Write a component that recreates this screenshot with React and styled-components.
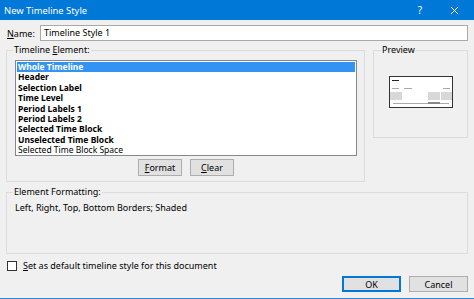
import React from "react";
import styled, { createGlobalStyle } from "styled-components";

const GlobalStyle = createGlobalStyle`
  html, body {
    margin: 0;
    padding: 0;
    background: #f0f0f0;
  }
  * {
    box-sizing: border-box;
  }
`;

const elements = [
  { name: "Whole Timeline", bold: true },
  { name: "Header", bold: true },
  { name: "Selection Label", bold: true },
  { name: "Time Level", bold: true },
  { name: "Period Labels 1", bold: true },
  { name: "Period Labels 2", bold: true },
  { name: "Selected Time Block", bold: true },
  { name: "Unselected Time Block", bold: true },
  { name: "Selected Time Block Space", bold: false },
];

const App = () => {
  return (
    <Window>
      <GlobalStyle />
      <TitleBar>
        <Title>New Timeline Style</Title>
        <TitleButtons>
          <HelpGlyph>?</HelpGlyph>
          <CloseGlyph viewBox="0 0 10 10">
            <path d="M1 1 L9 9 M9 1 L1 9" stroke="#fff" strokeWidth="1.1" />
          </CloseGlyph>
        </TitleButtons>
      </TitleBar>

      <Content>
        <NameRow>
          <NameLabel>
            <u>N</u>ame:
          </NameLabel>
          <NameInput>Timeline Style 1</NameInput>
        </NameRow>

        <MiddleRow>
          <ElementGroup>
            <GroupLegend>
              Timeline <u>E</u>lement:
            </GroupLegend>
            <ListBox>
              {elements.map((el, i) => (
                <ListItem key={el.name} $bold={el.bold} $selected={i === 0}>
                  {el.name}
                </ListItem>
              ))}
            </ListBox>
            <ButtonRow>
              <Button>
                <u>F</u>ormat
              </Button>
              <Button>
                <u>C</u>lear
              </Button>
            </ButtonRow>
          </ElementGroup>

          <PreviewGroup>
            <GroupLegend>Preview</GroupLegend>
            <PreviewPic viewBox="0 0 64 32">
              <rect x="0.5" y="0.5" width="63" height="31" fill="#fff" stroke="#333" />
              <rect x="3" y="4" width="7" height="1" fill="#222" />
              <rect x="3" y="12" width="7" height="1" fill="#aaa" />
              <rect x="15" y="12" width="8" height="1" fill="#aaa" />
              <rect x="54" y="12" width="7" height="1" fill="#aaa" />
              <rect x="1" y="16" width="12" height="8" fill="#d8d8d8" />
              <rect x="39" y="16" width="12" height="8" fill="#d8d8d8" />
              <rect x="52" y="16" width="11" height="8" fill="#d8d8d8" />
              <rect x="4" y="27" width="56" height="1" fill="#aaa" />
              <rect x="39" y="26" width="12" height="2" fill="#888" />
            </PreviewPic>
          </PreviewGroup>
        </MiddleRow>

        <FormattingGroup>
          <GroupLegend>Element Formatting:</GroupLegend>
          <FormattingText>Left, Right, Top, Bottom Borders; Shaded</FormattingText>
        </FormattingGroup>

        <CheckRow>
          <CheckBox />
          <CheckLabel>
            <u>S</u>et as default timeline style for this document
          </CheckLabel>
        </CheckRow>

        <FooterRow>
          <Button $primary $wide>
            OK
          </Button>
          <Button $wide>Cancel</Button>
        </FooterRow>
      </Content>
    </Window>
  );
};

const Window = styled.div`
  width: 474px;
  height: 299px;
  background: #f0f0f0;
  font-family: "Noto Sans", "Open Sans", sans-serif;
  font-size: 9px;
  color: #000;
  overflow: hidden;
  border-bottom: 1px solid #2b88d8;
`;

const TitleBar = styled.div`
  height: 20px;
  background: #0078d7;
  display: flex;
  align-items: center;
  justify-content: space-between;
  padding: 0 15px 0 4px;
`;

const Title = styled.div`
  color: #fff;
  font-size: 9.4px;
`;

const TitleButtons = styled.div`
  display: flex;
  align-items: center;
  gap: 28px;
`;

const HelpGlyph = styled.span`
  color: #fff;
  font-size: 10px;
`;

const CloseGlyph = styled.svg`
  width: 9px;
  height: 9px;
`;

const Content = styled.div`
  padding: 5px 6px 0 6px;
  display: flex;
  flex-direction: column;
`;

const NameRow = styled.div`
  display: flex;
  align-items: center;
  height: 16px;
`;

const NameLabel = styled.div`
  width: 34px;
  padding-left: 1px;
`;

const NameInput = styled.div`
  flex: 1;
  height: 16px;
  background: #fff;
  border: 1px solid #a9a9a9;
  padding: 0 3px;
  line-height: 14px;
`;

const MiddleRow = styled.div`
  display: flex;
  align-items: flex-start;
  gap: 8px;
  margin-top: 3px;
`;

const Group = styled.fieldset`
  margin: 0;
  border: 1px solid #dcdcdc;
  padding: 0 7px 0 6px;
  min-width: 0;
`;

const GroupLegend = styled.legend`
  padding: 0 1px;
  line-height: 12px;
`;

const ElementGroup = styled(Group)`
  width: 359px;
  height: 138px;
`;

const PreviewGroup = styled(Group)`
  width: 95px;
  height: 94px;
  padding: 0;
  display: flex;
  flex-direction: column;
  align-items: center;
  legend {
    margin-left: 7px;
  }
`;

const PreviewPic = styled.svg`
  width: 64px;
  height: 32px;
  margin-top: 20px;
  margin-left: 1px;
`;

const ListBox = styled.div`
  margin: 4px 0 0 2px;
  height: 96px;
  background: #fff;
  border: 1px solid #828790;
  padding: 1px 1px;
  font-size: 8.5px;
`;

const ListItem = styled.div`
  height: 10.4px;
  line-height: 10.4px;
  padding-left: 1px;
  font-weight: ${(p) => (p.$bold ? 700 : 400)};
  background: ${(p) => (p.$selected ? "#3393f2" : "transparent")};
  color: ${(p) => (p.$selected ? "#fff" : "#000")};
  white-space: nowrap;
`;

const ButtonRow = styled.div`
  display: flex;
  justify-content: center;
  gap: 8px;
  margin-top: 3px;
  padding-left: 2px;
`;

const Button = styled.div`
  width: ${(p) => (p.$wide ? "59px" : "44px")};
  height: ${(p) => (p.$wide ? "16px" : "17px")};
  background: #e1e1e1;
  border: 1px solid ${(p) => (p.$primary ? "#0078d7" : "#adadad")};
  box-shadow: ${(p) => (p.$primary ? "inset 0 0 0 1px #0078d7" : "none")};
  display: flex;
  align-items: center;
  justify-content: center;
`;

const FormattingGroup = styled(Group)`
  height: 68px;
  margin-top: 4px;
`;

const FormattingText = styled.div`
  padding-left: 2px;
  margin-top: 3px;
`;

const CheckRow = styled.div`
  display: flex;
  align-items: center;
  gap: 6px;
  margin-top: 5px;
  padding-left: 1px;
`;

const CheckBox = styled.div`
  width: 10px;
  height: 10px;
  background: #fff;
  border: 1px solid #333;
`;

const CheckLabel = styled.div``;

const FooterRow = styled.div`
  display: flex;
  justify-content: flex-end;
  gap: 8px;
  margin-top: 4px;
`;

export default App;
